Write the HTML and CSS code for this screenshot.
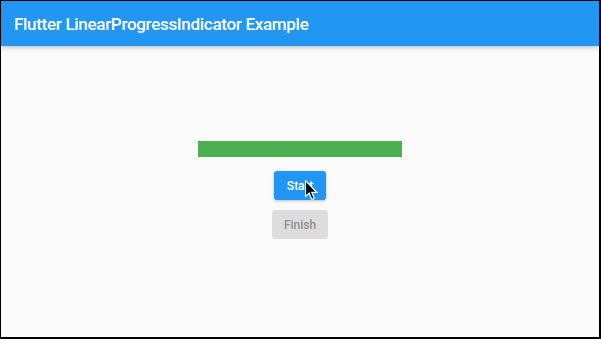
FILE: index.html
```html
<!DOCTYPE html>
<html>
<head>
<meta charset="utf-8">
<link rel="stylesheet" href="styles.css">
</head>
<body>
<div class="frame">
  <header class="appbar">
    <h1 class="title">Flutter LinearProgressIndicator Example</h1>
  </header>
  <main class="content">
    <div class="progress"><div class="progress-fill"></div></div>
    <button class="btn btn-start">Start
      <svg class="cursor" width="13" height="21" viewBox="0 0 13 21">
        <path d="M0.5 0.5 L0.5 16.5 L4.2 13 L6.8 19.5 L9.3 18.4 L6.8 12.3 L11.8 12.3 Z" fill="#000" stroke="#fff" stroke-width="1.2" stroke-linejoin="miter"/>
      </svg>
    </button>
    <button class="btn btn-finish" disabled>Finish</button>
  </main>
</div>
</body>
</html>
```
FILE: styles.css
```css
html, body {
  margin: 0;
  padding: 0;
}
body {
  width: 601px;
  height: 339px;
  overflow: hidden;
  font-family: Roboto, "Liberation Sans", sans-serif;
}
.frame {
  box-sizing: border-box;
  width: 601px;
  height: 339px;
  border-style: solid;
  border-color: #000;
  border-width: 1px 2px 2px 1px;
  background: #fafafa;
  display: flex;
  flex-direction: column;
}
.appbar {
  height: 45px;
  background: #2196f3;
  box-shadow: 0 2px 4px rgba(0,0,0,0.2);
  display: flex;
  align-items: center;
  padding-left: 13px;
  position: relative;
  z-index: 1;
}
.title {
  margin: 0;
  color: #fff;
  font-size: 17px;
  font-weight: 500;
  letter-spacing: -0.3px;
}
.content {
  flex: 1;
  display: flex;
  flex-direction: column;
  align-items: center;
  padding-top: 95px;
}
.progress {
  width: 204px;
  height: 16px;
  background: #a5d6a7;
}
.progress-fill {
  width: 100%;
  height: 100%;
  background: #4caf50;
}
.btn {
  font-family: Roboto, "Liberation Sans", sans-serif;
  font-size: 12px;
  font-weight: 500;
  border: none;
  border-radius: 3px;
  height: 29px;
  padding: 0;
  position: relative;
}
.btn-start {
  margin-top: 14px;
  width: 52px;
  background: #2196f3;
  color: #fff;
  box-shadow: 0 1px 3px rgba(0,0,0,0.25);
}
.btn-finish {
  margin-top: 10px;
  width: 56px;
  background: #dcdcdc;
  color: #8f8f8f;
}
.cursor {
  position: absolute;
  left: 31px;
  top: 9px;
}
```
